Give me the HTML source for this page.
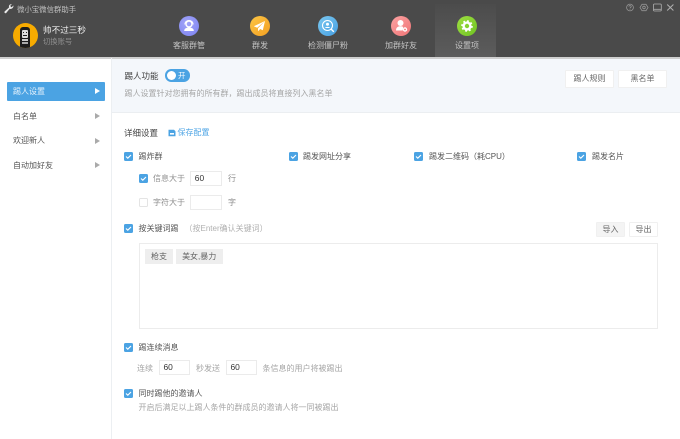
<!DOCTYPE html>
<html lang="zh">
<head>
<meta charset="utf-8">
<style>
html,body{margin:0;padding:0;width:680px;height:439px;overflow:hidden;background:#fff}
body{position:relative;font-family:"Liberation Sans","Noto Sans CJK SC",sans-serif}
#w{position:absolute;left:0;top:0;width:680px;height:439px;filter:blur(.35px);overflow:hidden}
.a{position:absolute}
.t{position:absolute;white-space:nowrap;font-size:8px;line-height:12px;color:#555}
.c{transform:translateX(-50%)}
.cb{position:absolute;width:9px;height:9px;background:#4ba3e3;border-radius:1.5px}
.cb svg{position:absolute;left:0;top:0;width:9px;height:9px}
.off{background:#fff;border:1px solid #e4e4e4;box-sizing:border-box}
.inp{position:absolute;box-sizing:border-box;background:#fff;border:1px solid #ebebeb;width:31px;height:15px;font-size:8.4px;line-height:13px;padding-left:3.5px;color:#333}
.btn{position:absolute;box-sizing:border-box;background:#fff;border:1px solid #f0f0f0;text-align:center;color:#666;border-radius:1px}
.ic{position:absolute;width:20px;height:20px;border-radius:50%;top:16px}
.ic svg{position:absolute;left:0;top:0;width:20px;height:20px}
.nav{color:#c4c4c4}
.arr{position:absolute;left:95px;width:0;height:0;border-left:5px solid #aaa;border-top:3.2px solid transparent;border-bottom:3.2px solid transparent}
.tag{position:absolute;top:249px;height:15px;background:#eee;color:#666;font-size:8px;line-height:15px;text-align:center}
</style>
</head>
<body>
<div id="w">
  <!-- header -->
  <div class="a" style="left:0;top:0;width:680px;height:57px;background:#4a4a4a"></div>
  <div class="a" style="left:0;top:57px;width:680px;height:1.5px;background:#cfcfcf"></div>
  <div class="a" style="left:435px;top:4px;width:61px;height:53px;background:linear-gradient(#4c4c4c,#5c5c5c)"></div>

  <svg class="a" style="left:4px;top:4px" width="10" height="10" viewBox="0 0 10 10"><path d="M9.500 1.500 7.600 3.200 6.600 2.600 6.500 1.300 8 .4C6.500-.2 4.900.8 4.900 2.400c0 .4 0 .7.2 1L.7 7.400c-.6.6-.2 2.200 1.400 1.700l3.600-4.300c1.900.7 3.900-.9 3.800-3.300z" fill="#e8e8e8"/></svg>
  <div class="t" style="left:17px;top:3.500px;font-size:7.400px;color:#c0c0c0">微小宝微信群助手</div>

  <div class="a" style="left:12.700px;top:23.300px;width:25px;height:25px;border-radius:50%;background:#f7ab00;overflow:hidden">
    <div class="a" style="left:7.500px;top:4px;width:9.500px;height:21px;background:#1c1c1c;border-radius:3px 3px 0 0"></div>
    <div class="a" style="left:9px;top:6.500px;width:6.500px;height:8px;background:#ddd;border-radius:1px"></div>
    <div class="a" style="left:10px;top:8.500px;width:1.500px;height:1.500px;background:#222"></div>
    <div class="a" style="left:13px;top:8.500px;width:1.500px;height:1.500px;background:#222"></div>
    <div class="a" style="left:10px;top:12px;width:4.500px;height:1px;background:#222"></div>
    <div class="a" style="left:9.500px;top:16px;width:5.500px;height:1.500px;background:#ccc"></div>
    <div class="a" style="left:9.500px;top:19px;width:5.500px;height:1.500px;background:#aaa"></div>
  </div>
  <div class="t" style="left:43px;top:24px;font-size:8.600px;color:#f0f0f0">帅不过三秒</div>
  <div class="t" style="left:43px;top:36px;font-size:7.300px;color:#8f8f8f">切换账号</div>

  <!-- nav icons -->
  <div class="ic" style="left:179px;background:radial-gradient(circle at 40% 35%,#a3a6f8,#7a80f0)">
    <svg viewBox="0 0 20 20"><circle cx="10" cy="8" r="3" fill="none" stroke="#fff" stroke-width="1.400"/><path d="M5.200 15c0-2.500 2-3.500 4.800-3.500s4.800 1 4.800 3.500z" fill="#fff"/><path d="M5.800 8.500c0-5.500 8.400-5.500 8.400 0" fill="none" stroke="#fff" stroke-width=".8"/></svg>
  </div>
  <div class="ic" style="left:250px;background:linear-gradient(135deg,#fcc645,#f39f22)">
    <svg viewBox="0 0 20 20"><path d="M15 5 3.800 10.300l3.400 1.500zM15 5 8 12.300v3l2.200-2.300 2.600 1.200z" fill="#fff"/></svg>
  </div>
  <div class="ic" style="left:318px;background:linear-gradient(135deg,#7cc9f0,#469fe2)">
    <svg viewBox="0 0 20 20"><circle cx="9.500" cy="9.500" r="5" fill="none" stroke="#fff" stroke-width="1.100"/><path d="m13 13 2.800 2.800" stroke="#fff" stroke-width="1.400"/><circle cx="9.500" cy="8.300" r="1.500" fill="#fff"/><path d="M7 12c.3-1.500 4.700-1.500 5 0z" fill="#fff"/></svg>
  </div>
  <div class="ic" style="left:391px;background:linear-gradient(135deg,#fca3a3,#ef7576)">
    <svg viewBox="0 0 20 20"><circle cx="9.500" cy="7" r="3" fill="#fff"/><path d="M5 14.500c0-3 2-4.200 4.500-4.200 1 0 2 .2 2.700.7l-.5 3.500z" fill="#fff"/><circle cx="14" cy="13.500" r="2.200" fill="#fff"/><circle cx="14" cy="13.500" r=".9" fill="#ef7576"/></svg>
  </div>
  <div class="ic" style="left:457px;background:linear-gradient(135deg,#9fdf42,#70c422)">
    <svg viewBox="0 0 20 20"><circle cx="10" cy="10" r="3.400" fill="none" stroke="#fff" stroke-width="2.400"/><circle cx="10" cy="10" r="5" fill="none" stroke="#fff" stroke-width="1.600" stroke-dasharray="1.900 2"/></svg>
  </div>
  <div class="t nav c" style="left:189px;top:40px">客服群管</div>
  <div class="t nav c" style="left:260px;top:40px">群发</div>
  <div class="t nav c" style="left:328px;top:40px">检测僵尸粉</div>
  <div class="t nav c" style="left:401px;top:40px">加群好友</div>
  <div class="t nav c" style="left:467px;top:40px">设置项</div>

  <!-- window controls -->
  <svg class="a" style="left:625px;top:2.500px" width="52" height="10" viewBox="0 0 52 10" fill="none" stroke="#959595" stroke-width=".8">
    <circle cx="5" cy="4.500" r="3.400"/><path d="M3.800 3.600c.2-1.400 2.400-1.300 2.400 0 0 .9-1.200.9-1.200 1.800M5 6v.6"/>
    <circle cx="19" cy="4.500" r="1.300"/><path d="m17 1.300h4l2 3.200-2 3.200h-4l-2-3.200z"/>
    <rect x="28.500" y="1" width="7.800" height="7" rx="1" stroke="#b0b0b0"/><path d="M28.500 6.300h7.800" stroke="#b0b0b0"/>
    <path d="m42.200 1.500 6.200 6m0-6-6.200 6" stroke="#b0b0b0" stroke-width="1"/>
  </svg>

  <!-- sidebar -->
  <div class="a" style="left:111px;top:58px;width:1px;height:381px;background:#eceff2"></div>
  <div class="a" style="left:6.500px;top:82.300px;width:98.500px;height:18.500px;background:#4ba3e3;border-radius:1px"></div>
  <div class="t" style="left:13px;top:85.500px;color:#e8f3fc">踢人设置</div>
  <div class="arr" style="top:88.300px;border-left-color:#fff"></div>
  <div class="t" style="left:13px;top:110.500px">白名单</div>
  <div class="arr" style="top:113.300px"></div>
  <div class="t" style="left:13px;top:135px">欢迎新人</div>
  <div class="arr" style="top:137.800px"></div>
  <div class="t" style="left:13px;top:160px">自动加好友</div>
  <div class="arr" style="top:162.300px"></div>

  <!-- top panel -->
  <div class="a" style="left:112px;top:58.500px;width:568px;height:54.500px;background:#f4f7fb;border-bottom:1px solid #ebeef1;box-sizing:border-box"></div>
  <div class="t" style="left:124.500px;top:69.500px;font-size:8.500px;color:#444">踢人功能</div>
  <div class="a" style="left:165.300px;top:69.300px;width:24.700px;height:12.400px;border-radius:6.200px;background:#4ba3e3"></div>
  <div class="a" style="left:166.700px;top:71px;width:9px;height:9px;border-radius:50%;background:#fff"></div>
  <div class="t" style="left:178px;top:69.500px;color:#fff;font-size:7.500px">开</div>
  <div class="t" style="left:124.500px;top:87.500px;color:#a5a5a5">踢人设置针对您拥有的所有群，踢出成员将直接列入黑名单</div>
  <div class="btn" style="left:565px;top:70px;width:49px;height:18px;line-height:16px;font-size:8px">踢人规则</div>
  <div class="btn" style="left:618px;top:70px;width:49px;height:18px;line-height:16px;font-size:8px">黑名单</div>

  <!-- details -->
  <div class="t" style="left:124px;top:126.500px;font-size:8.500px;color:#444">详细设置</div>
  <svg class="a" style="left:168px;top:129px" width="8" height="8" viewBox="0 0 8 8"><path d="M.5 .7h5.500l1.500 1.500v5h-7z" fill="#4ba3e3"/><rect x="2" y="4" width="4" height="1.600" fill="#fff"/></svg>
  <div class="t" style="left:177.500px;top:127px;color:#4fa5e5">保存配置</div>

  <div class="cb" style="left:124px;top:152.200px"><svg viewBox="0 0 9 9"><path d="m2 4.500 1.800 1.700L7 3" fill="none" stroke="#fff" stroke-width="1.100"/></svg></div>
  <div class="t" style="left:138.500px;top:150.500px">踢炸群</div>
  <div class="cb" style="left:288.500px;top:152.200px"><svg viewBox="0 0 9 9"><path d="m2 4.500 1.800 1.700L7 3" fill="none" stroke="#fff" stroke-width="1.100"/></svg></div>
  <div class="t" style="left:303px;top:150.500px">踢发网址分享</div>
  <div class="cb" style="left:414px;top:152.200px"><svg viewBox="0 0 9 9"><path d="m2 4.500 1.800 1.700L7 3" fill="none" stroke="#fff" stroke-width="1.100"/></svg></div>
  <div class="t" style="left:429px;top:150.500px">踢发二维码（耗CPU）</div>
  <div class="cb" style="left:577px;top:152.200px"><svg viewBox="0 0 9 9"><path d="m2 4.500 1.800 1.700L7 3" fill="none" stroke="#fff" stroke-width="1.100"/></svg></div>
  <div class="t" style="left:592px;top:150.500px">踢发名片</div>

  <div class="cb" style="left:139px;top:173.500px"><svg viewBox="0 0 9 9"><path d="m2 4.500 1.800 1.700L7 3" fill="none" stroke="#fff" stroke-width="1.100"/></svg></div>
  <div class="t" style="left:153px;top:173px;color:#8f8f8f">信息大于</div>
  <div class="inp" style="left:190.300px;top:171.300px;width:31.500px">60</div>
  <div class="t" style="left:228px;top:173px;color:#8f8f8f">行</div>

  <div class="cb off" style="left:139px;top:197.500px"></div>
  <div class="t" style="left:153px;top:197px;color:#8f8f8f">字符大于</div>
  <div class="inp" style="left:190.300px;top:195.300px;width:31.500px"></div>
  <div class="t" style="left:228px;top:197px;color:#8f8f8f">字</div>

  <div class="cb" style="left:124px;top:223.500px"><svg viewBox="0 0 9 9"><path d="m2 4.500 1.800 1.700L7 3" fill="none" stroke="#fff" stroke-width="1.100"/></svg></div>
  <div class="t" style="left:138.500px;top:223px">按关键词踢</div>
  <div class="t" style="left:184.500px;top:223px;color:#b0b0b0">（按Enter确认关键词）</div>
  <div class="btn" style="left:596px;top:222px;width:29px;height:15px;line-height:13px;background:#f4f4f4;font-size:8px">导入</div>
  <div class="btn" style="left:629px;top:222px;width:29px;height:15px;line-height:13px;font-size:8px">导出</div>

  <div class="a" style="left:139.300px;top:243px;width:518.500px;height:86.300px;box-sizing:border-box;border:1px solid #ececec"></div>
  <div class="tag" style="left:145px;width:28px">枪支</div>
  <div class="tag" style="left:175.700px;width:47px">美女,暴力</div>

  <div class="cb" style="left:124px;top:343px"><svg viewBox="0 0 9 9"><path d="m2 4.500 1.800 1.700L7 3" fill="none" stroke="#fff" stroke-width="1.100"/></svg></div>
  <div class="t" style="left:138.500px;top:342px">踢连续消息</div>

  <div class="t" style="left:137px;top:362.700px;color:#a5a5a5">连续</div>
  <div class="inp" style="left:159px;top:360px;width:31px">60</div>
  <div class="t" style="left:196px;top:362.700px;color:#a5a5a5">秒发送</div>
  <div class="inp" style="left:226px;top:360px;width:31px">60</div>
  <div class="t" style="left:262.500px;top:362.700px;color:#a5a5a5">条信息的用户将被踢出</div>

  <div class="cb" style="left:124px;top:388.800px"><svg viewBox="0 0 9 9"><path d="m2 4.500 1.800 1.700L7 3" fill="none" stroke="#fff" stroke-width="1.100"/></svg></div>
  <div class="t" style="left:138.500px;top:388px">同时踢他的邀请人</div>
  <div class="t" style="left:138.500px;top:402.400px;color:#a5a5a5">开启后满足以上踢人条件的群成员的邀请人将一同被踢出</div>
</div>
</body>
</html>
